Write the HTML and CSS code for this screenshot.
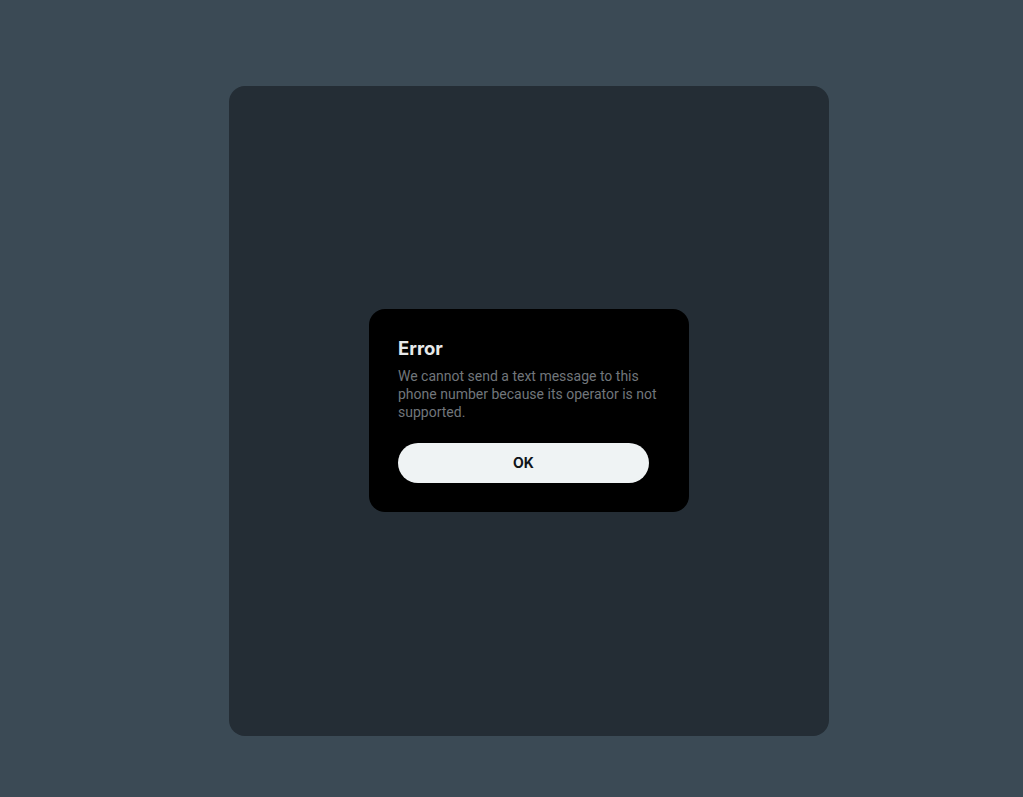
FILE: index.html
```html
<!DOCTYPE html>
<html lang="en">
<head>
<meta charset="utf-8">
<title>Error</title>
<link rel="stylesheet" href="styles.css">
</head>
<body>
<div class="page">
  <div class="card">
    <div class="dialog" role="alertdialog">
      <h1 class="title">Error</h1>
      <p class="message">We cannot send a text message to this phone number because its operator is not supported.</p>
      <button class="ok" type="button">OK</button>
    </div>
  </div>
</div>
</body>
</html>
```
FILE: styles.css
```css
html, body {
  margin: 0;
  padding: 0;
  background: #3b4a55;
  height: 100%;
}
body {
  font-family: "Inter", "Liberation Sans", sans-serif;
}
.page {
  padding: 86px 0 0 229px;
}
.card {
  width: 600px;
  height: 650px;
  box-sizing: border-box;
  padding-bottom: 2px;
  background: #242d35;
  border-radius: 16px;
  display: flex;
  align-items: center;
  justify-content: center;
}
.dialog {
  width: 320px;
  box-sizing: border-box;
  background: #000000;
  border-radius: 16px;
  padding: 27px 29px 29px 29px;
}
.title {
  margin: 0;
  font-size: 18.5px;
  line-height: 24px;
  font-weight: 700;
  color: #e7e9ea;
}
.message {
  margin: 7px -8px 0 0;
  font-family: "Roboto", "Liberation Sans", sans-serif;
  font-size: 14px;
  line-height: 18px;
  color: #71767b;
}
.ok {
  display: block;
  margin-top: 22px;
  width: 251px;
  height: 40px;
  border: none;
  border-radius: 20px;
  background: #eff3f4;
  color: #0f1419;
  font-family: inherit;
  font-size: 14px;
  font-weight: 700;
  cursor: pointer;
}
```
